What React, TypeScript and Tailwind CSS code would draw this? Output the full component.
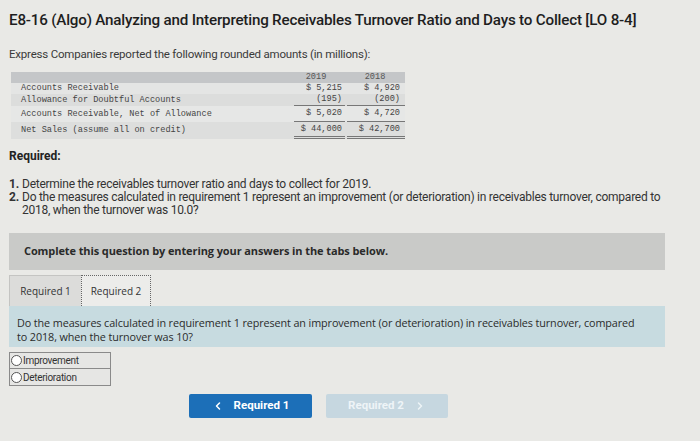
import { ChevronLeft, ChevronRight } from "lucide-react";

const rows = [
  { label: "Accounts Receivable", a: "$ 5,215", b: "$ 4,920", bg: "bg-[#e4e5e4]", h: "h-[11px]" },
  { label: "Allowance for Doubtful Accounts", a: "(195)", b: "(200)", bg: "bg-[#dcdddc]", h: "h-[12px]", under: true },
  { label: "Accounts Receivable, Net of Allowance", a: "$ 5,020", b: "$ 4,720", bg: "bg-[#e6e7e6]", h: "h-[16px]", under: true },
  { label: "Net Sales (assume all on credit)", a: "$ 44,000", b: "$ 42,700", bg: "bg-[#dddedd]", h: "h-[17px]", dbl: true },
];

export default function App() {
  return (
    <div className="w-[700px] h-[441px] overflow-hidden bg-[#e9e9e6] text-[#222] font-['Roboto','Liberation_Sans',sans-serif]">
      <div className="px-[9px] pt-[10px]">
        <h1 className="text-[15.2px] font-medium tracking-[-0.2px] text-[#1e1e1e] leading-[20px]">
          E8-16 (Algo) Analyzing and Interpreting Receivables Turnover Ratio and Days to Collect [LO 8-4]
        </h1>
        <p className="mt-[16px] text-[11.5px] text-[#3a3a3a] tracking-[-0.2px] leading-[16px]">
          Express Companies reported the following rounded amounts (in millions):
        </p>

        <div className="mt-[10px] ml-[2px] w-[394px] font-['Liberation_Mono',monospace] text-[8.6px] text-[#444] leading-[11px]">
          <div className="flex bg-[#c4c6c8] h-[11px]">
            <div className="flex-1" />
            <div className="w-[58px] text-center text-[#555]">2019</div>
            <div className="w-[60px] text-center text-[#555]">2018</div>
          </div>
          {rows.map((r, i) => (
            <div key={i} className={`flex ${r.bg} ${r.h}`}>
              <div className="flex-1 pl-[10px] flex items-center">{r.label}</div>
              <div
                className={`w-[51px] ml-[7px] text-right pr-[3px] flex items-center justify-end ${r.under ? "border-b border-[#777]" : ""} ${r.dbl ? "border-b-[3px] border-double border-[#777]" : ""}`}
              >
                {r.a}
              </div>
              <div
                className={`w-[58px] ml-[2px] text-right pr-[5px] flex items-center justify-end ${r.under ? "border-b border-[#777]" : ""} ${r.dbl ? "border-b-[3px] border-double border-[#777]" : ""}`}
              >
                {r.b}
              </div>
            </div>
          ))}
        </div>

        <p className="mt-[8px] text-[12px] font-bold text-[#222]">Required:</p>
        <ol className="mt-[13px] text-[12px] text-[#333] leading-[13px] tracking-[-0.25px] w-[665px]">
          <li className="flex">
            <span className="font-bold w-[13px] shrink-0">1.</span>
            <span>Determine the receivables turnover ratio and days to collect for 2019.</span>
          </li>
          <li className="flex">
            <span className="font-bold w-[13px] shrink-0">2.</span>
            <span>
              Do the measures calculated in requirement 1 represent an improvement (or deterioration) in receivables
              turnover, compared to 2018, when the turnover was 10.0?
            </span>
          </li>
        </ol>

        <div className="mt-[16px] w-[656px] h-[37px] bg-[#c9cac8] flex items-center pl-[15px]">
          <span className="font-['Open_Sans',sans-serif] font-bold text-[11px] text-[#2a2a2a] tracking-[-0.1px]">
            Complete this question by entering your answers in the tabs below.
          </span>
        </div>

        <div className="mt-[5px] flex h-[31px] font-['Open_Sans',sans-serif] text-[10px] text-[#333]">
          <div className="w-[72px] bg-[#dcdcda] border-t border-l border-[#c4c4c2] flex items-center justify-center">
            Required 1
          </div>
          <div className="w-[70px] bg-[#ececea] border border-dotted border-b-0 border-[#666] flex items-center justify-center">
            Required 2
          </div>
        </div>

        <div className="w-[656px] h-[41px] bg-[#c7dbe0] pl-[8px] pr-[30px] pt-[10px] font-['Open_Sans',sans-serif] text-[10.8px] leading-[14px] text-[#2b2b2b] tracking-[-0.1px]">
          Do the measures calculated in requirement 1 represent an improvement (or deterioration) in receivables turnover, compared to 2018, when the turnover was 10?
        </div>

        <div className="mt-[5px] w-[102px] text-[10px] text-[#333] tracking-[-0.3px]">
          {["Improvement", "Deterioration"].map((t, i) => (
            <div
              key={t}
              className={`flex items-center h-[17px] border border-[#8a8a8a] bg-[#e6e6e4] ${i > 0 ? "border-t-0" : ""}`}
            >
              <span className="w-[11px] h-[11px] rounded-full border border-[#555] bg-white ml-[1px] mr-[1px]" />
              {t}
            </div>
          ))}
        </div>

        <div className="mt-[8px] ml-[180px] flex gap-[14px] font-['Roboto',sans-serif] text-[11.5px] font-bold">
          <div className="w-[123px] h-[24px] bg-[#1c6fb8] rounded-[2px] text-white flex items-center justify-center gap-[10px]">
            <ChevronLeft size={12} strokeWidth={3} />
            <span>Required 1</span>
          </div>
          <div className="w-[122px] h-[24px] bg-[#c6d7e0] rounded-[2px] text-[#eef4f7] flex items-center justify-center gap-[10px]">
            <span>Required 2</span>
            <ChevronRight size={12} strokeWidth={3} />
          </div>
        </div>
      </div>
    </div>
  );
}
